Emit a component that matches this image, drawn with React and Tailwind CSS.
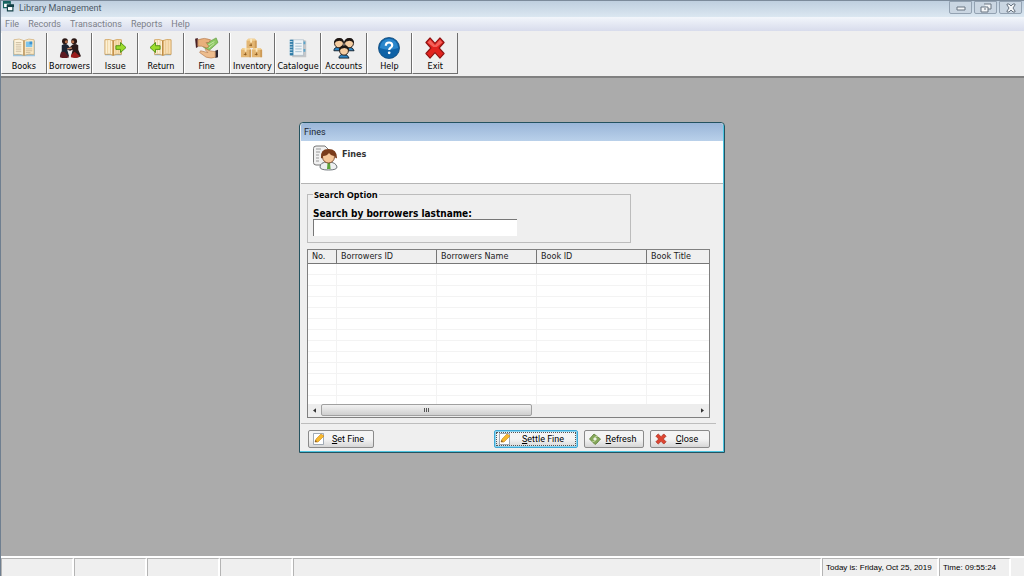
import { useState } from 'react';

const menus = ['File', 'Records', 'Transactions', 'Reports', 'Help'];

const columns = [
    { label: 'No.', width: 'w-[29px]' },
    { label: 'Borrowers ID', width: 'w-[100px]' },
    { label: 'Borrowers Name', width: 'w-[100px]' },
    { label: 'Book ID', width: 'w-[110px]' },
    { label: 'Book Title', width: 'w-[120px]' },
];

const emptyRows = Array.from({ length: 13 }, (_, i) => i);

/* ---------- toolbar icons ---------- */

function BooksIcon() {
    return (
        <svg viewBox="0 0 26 24" className="w-[26px] h-6" aria-hidden="true">
            <path d="M1 4h24v17H1z" fill="#9cc3de" />
            <path d="M2 3q6-2 11 1v16q-5-2-11-1z" fill="#fdf3dc" stroke="#c9a56c" strokeWidth=".7" />
            <path d="M24 3q-6-2-11 1v16q5-2 11-1z" fill="#fbe9c6" stroke="#c9a56c" strokeWidth=".7" />
            <path d="M4 6h6M4 8h6M4 10h6M4 12h6M4 14h6M4 16h6M15 13h7M15 15h7M15 17h5" stroke="#b9a88a" strokeWidth=".7" />
            <path d="M15 5h7v6h-7z" fill="#7cc4ec" />
            <path d="M19 5h3v3h-3z" fill="#3c93d0" />
            <path d="M13 4v16" stroke="#a3763a" strokeWidth="1" />
        </svg>
    );
}

function BorrowersIcon() {
    return (
        <svg viewBox="0 0 26 24" className="w-[26px] h-6" aria-hidden="true">
            <circle cx="7.500" cy="4.500" r="3.200" fill="#2a1714" />
            <circle cx="9" cy="5.200" r="1.700" fill="#b4714e" />
            <circle cx="17.500" cy="4.500" r="3.200" fill="#2a1714" />
            <circle cx="16" cy="5.200" r="1.700" fill="#b4714e" />
            <path d="M4 9q4-3 7 0l3 4-1 2-3-1 2 7q-5 3-10 0l2-6z" fill="#1d2433" />
            <path d="M22 9q-4-3-7 0l-3 3 1 3 3-1-2 7q6 3 11 0l-3-7z" fill="#2b1a1a" />
            <path d="M3 17l4-1 5 6q-5 2-10 0z" fill="#5e1a22" />
            <path d="M14 20l4-4 6 5q-4 3-10 1z" fill="#9b1d1c" />
            <path d="M10 13l5-1" stroke="#c98a68" strokeWidth="1.500" />
        </svg>
    );
}

function BookPages() {
    return (
        <>
            <path d="M2 4h18v16H2z" fill="#8fbbe0" />
            <path d="M2 3q5-1 9 1v16q-4-2-9-1z" fill="#fdf1d6" stroke="#c9923f" strokeWidth=".8" />
            <path d="M20 3q-5-1-9 1v16q4-2 9-1z" fill="#f9dfb4" stroke="#c9923f" strokeWidth=".8" />
            <path d="M5 3v15M8 3v16M14 3v16M17 3v15" stroke="#e6c58c" strokeWidth=".8" />
            <path d="M11 4v16" stroke="#b4792e" strokeWidth="1" />
        </>
    );
}

const arrowPath = 'M14 9.500h5V6l6 5.500-6 5.500v-3.500h-5z';

function IssueIcon() {
    return (
        <svg viewBox="0 0 26 24" className="w-[26px] h-6" aria-hidden="true">
            <BookPages />
            <path d={arrowPath} fill="#9bdc2c" stroke="#4f8d12" strokeWidth="1" strokeLinejoin="round" />
        </svg>
    );
}

function ReturnIcon() {
    return (
        <svg viewBox="0 0 26 24" className="w-[26px] h-6" aria-hidden="true">
            <g transform="translate(4 0)">
                <BookPages />
            </g>
            <path d={arrowPath} transform="matrix(-1 0 0 1 26 0)" fill="#9bdc2c" stroke="#4f8d12" strokeWidth="1" strokeLinejoin="round" />
        </svg>
    );
}

function FineIcon() {
    return (
        <svg viewBox="0 0 26 24" className="w-[26px] h-6" aria-hidden="true">
            <path d="M10 8L23 1l2 5-10 9-6-4z" fill="#8cc763" stroke="#5b9638" strokeWidth=".7" />
            <path d="M14 9l7-4M15 12l6-5" stroke="#cdeab0" strokeWidth="1" />
            <path d="M0 2l3-1v10l-2 1z" fill="#4a2226" />
            <path d="M3 3q7-3 14 0l-2 3h-3l3 4-2 2-6-2H3z" fill="#e8b07c" stroke="#a86a3d" strokeWidth=".6" />
            <path d="M22 15l3-1v8l-3 1z" fill="#2b2630" />
            <path d="M22 16l-6-1-4-2-1 1 3 3-8-2-1 2 7 5q6 2 10 0z" fill="#edbd8e" stroke="#a86a3d" strokeWidth=".6" />
        </svg>
    );
}

function InventoryBox({ x, y }) {
    return (
        <g transform={`translate(${x} ${y})`}>
            <path d="M0 2l2-2h7l2 2v8H0z" fill="#e3b673" />
            <path d="M0 2l2-2h7l2 2z" fill="#f2d296" />
            <path d="M9 2h2v8H9z" fill="#cd9a56" />
            <path d="M4 0h2v4H4z" fill="#fbe7bd" />
            <path d="M5 5v3M3 7h3" stroke="#8d5c20" strokeWidth="1" />
        </g>
    );
}

function InventoryIcon() {
    return (
        <svg viewBox="0 0 26 24" className="w-[26px] h-6" aria-hidden="true">
            <InventoryBox x={7} y={2} />
            <InventoryBox x={1} y={12} />
            <InventoryBox x={13} y={12} />
        </svg>
    );
}

function CatalogueIcon() {
    return (
        <svg viewBox="0 0 26 24" className="w-[26px] h-6" aria-hidden="true">
            <path d="M19 3l3 1v18H7l-1-2z" fill="#c4c6c8" />
            <path d="M5 3h14v17H5z" fill="#eef3f6" stroke="#9db1bf" strokeWidth=".6" />
            <path d="M4 3h4v17H4z" fill="#2f7ca8" />
            <path d="M3 5h4M3 8h4M3 11h4M3 14h4M3 17h4" stroke="#d7e6ee" strokeWidth="1" />
            <path d="M10 7h7M10 10h7M10 13h7M10 16h7" stroke="#8fb0c6" strokeWidth=".8" />
            <path d="M19 5h2v3h-2zM19 13h2v3h-2z" fill="#5aa5cc" />
        </svg>
    );
}

function Person({ x, y }) {
    return (
        <g transform={`translate(${x} ${y})`}>
            <path d="M1 14q0-4 5-4t6 4z" fill="#2e86c6" stroke="#14202b" strokeWidth="1" />
            <circle cx="6.500" cy="6" r="4.800" fill="#f5cda2" stroke="#1c1512" strokeWidth="1" />
            <path d="M1 6q0-6 6-6 5 0 5 6-2-3-5-3-4 0-6 3z" fill="#1c1512" />
        </g>
    );
}

function AccountsIcon() {
    return (
        <svg viewBox="0 0 26 24" className="w-[26px] h-6" aria-hidden="true">
            <Person x={1} y={1} />
            <Person x={12} y={1} />
            <Person x={6.5} y={9} />
        </svg>
    );
}

function HelpIcon() {
    return (
        <svg viewBox="0 0 26 24" className="w-[26px] h-6" aria-hidden="true">
            <circle cx="13" cy="12" r="11.500" fill="#0f62a6" stroke="#0b4474" strokeWidth=".8" />
            <path d="M3 12a10 10 0 0 1 20 0q-10 4-20 0z" fill="#2a86cb" />
            <path d="M9.500 9.500q0-3.500 3.600-3.500 3.400 0 3.400 3 0 1.800-1.800 2.800-1.500.900-1.500 2.500" fill="none" stroke="#fff" strokeWidth="2.400" />
            <circle cx="13.200" cy="17.200" r="1.500" fill="#fff" />
        </svg>
    );
}

const crossPath = 'M7 1l6 6 6-6 5 5-6 6 6 6-5 5-6-6-6 6-5-5 6-6-6-6z';

function ExitIcon() {
    return (
        <svg viewBox="0 0 26 24" className="w-[26px] h-6" aria-hidden="true">
            <g transform="translate(1.300 0) scale(.9 1)">
                <path d={crossPath} fill="#e2231f" stroke="#8e1413" strokeWidth="1.400" strokeLinejoin="round" />
                <path d="M7 3l6 6 6-6 3 3-7 5h-4L4 6z" fill="#f4615a" />
            </g>
        </svg>
    );
}

const tools = [
    { label: 'Books', Icon: BooksIcon },
    { label: 'Borrowers', Icon: BorrowersIcon },
    { label: 'Issue', Icon: IssueIcon },
    { label: 'Return', Icon: ReturnIcon },
    { label: 'Fine', Icon: FineIcon },
    { label: 'Inventory', Icon: InventoryIcon },
    { label: 'Catalogue', Icon: CatalogueIcon },
    { label: 'Accounts', Icon: AccountsIcon },
    { label: 'Help', Icon: HelpIcon },
    { label: 'Exit', Icon: ExitIcon },
];

/* ---------- small icons ---------- */

function AppIcon() {
    return (
        <svg viewBox="0 0 10 10" className="w-[11px] h-[11px]" aria-hidden="true">
            <path d="M.500 1h6v5h-6z" fill="#fff" stroke="#16625f" strokeWidth="1" />
            <path d="M0 0h7v2.500H0z" fill="#16625f" />
            <path d="M4 4h5v5H4z" fill="#fff" stroke="#123f46" strokeWidth="1" />
            <path d="M3.500 3H10v2.500H3.500z" fill="#123f46" />
        </svg>
    );
}

function NoteIcon() {
    return (
        <svg viewBox="0 0 12 12" className="w-3 h-3 shrink-0" aria-hidden="true">
            <path d="M.500.500h10v11H.500z" fill="#fff" stroke="#8a97a5" strokeWidth=".8" />
            <path d="M2 9l1-3 5-5 3 2-6 6z" fill="#f7b92e" stroke="#c9851a" strokeWidth=".6" />
            <path d="M2 9l.600-2L4 8.500z" fill="#6b4a22" />
        </svg>
    );
}

function RefreshIcon() {
    return (
        <svg viewBox="0 0 12 12" className="w-3 h-3 shrink-0" aria-hidden="true">
            <path d="M.500 6L4 2l1-1 6.500 5L8 10l-2 1.500z" fill="#86a85a" stroke="#5d7d38" strokeWidth=".8" strokeLinejoin="round" />
            <path d="M4 6l2-2 2 2-2 2z" fill="#eef2e6" />
            <path d="M6 4l3-1M6 8l-3 1" stroke="#c5dba2" strokeWidth=".8" />
        </svg>
    );
}

function CloseIcon() {
    return (
        <svg viewBox="0 0 26 24" className="w-3 h-3 shrink-0" aria-hidden="true">
            <path d={crossPath} fill="#dd4531" stroke="#a52a1c" strokeWidth="1.500" strokeLinejoin="round" />
        </svg>
    );
}

function FinesIcon() {
    return (
        <svg viewBox="0 0 26 26" className="w-[26px] h-[26px]" aria-hidden="true">
            <path d="M4 1h9l4 4v15H4q-2.500 0-2.500-2.500v-14Q1.500 1 4 1z" fill="#f1f1f1" stroke="#777" strokeWidth="1" />
            <path d="M4 4h5M4 7h4M4 10h3M4 13h3M4 16h3" stroke="#999" strokeWidth="1" />
            <path d="M8 22q0-5 8-5t9 5q0 3-8.500 3T8 22z" fill="#eef0f2" stroke="#6d7478" strokeWidth="1" />
            <path d="M15.500 18h2.500l.600 6h-3.600z" fill="#5ca43a" />
            <circle cx="16.500" cy="12" r="6" fill="#f6c79a" stroke="#6b3517" strokeWidth=".8" />
            <path d="M9 13Q8 4 16.500 4T25 13q-2 1-2-2-4 0-6-3-2 3-6 3 0 3-2 2z" fill="#7a3c1b" />
        </svg>
    );
}

const windowButtons = [
    { label: 'Minimize', path: 'M2 4h8v3H2z' },
    { label: 'Restore', path: 'M4 1h7v5H8M1 4h7v5H1zM4 6h2' },
    { label: 'Close', path: 'M2 1h2l2 2 2-2h2v1L8 5l2 3v1H8L6 7 4 9H2V8l2-3-2-3z' },
];

/* ---------- pieces ---------- */

function DialogButton({ icon, label, className, focused }) {
    return (
        <button
            type="button"
            className={`flex h-[18px] rounded-[2px] border p-px text-[9px] leading-3 text-black bg-linear-to-b from-[#f4f4f4] from-50% to-[#d6d6d6] ${
                focused ? 'border-[#3fa9d6] ring-1 ring-inset ring-[#8fd6f2]' : 'border-[#8a8a8a]'
            } ${className}`}
        >
            <span className={`flex h-full w-full items-center border border-dotted pl-[2px] ${focused ? 'border-[#555]' : 'border-transparent'}`}>
                {icon}
                <span className="flex-1 text-center">
                    <u className="underline-offset-1">{label[0]}</u>
                    {label.slice(1)}
                </span>
            </span>
        </button>
    );
}

function StatusPanel({ className, children }) {
    return (
        <div className={`h-full border-l border-t border-[#b4b4b4] border-r-2 border-r-white px-[3px] pt-[3px] text-[8px] leading-3 whitespace-nowrap ${className}`}>
            {children}
        </div>
    );
}

function FinesDialog() {
    const [lastname, setLastname] = useState('');

    return (
        <section
            role="dialog"
            aria-label="Fines"
            className="w-[426px] max-w-full rounded-t-[4px] border border-[#24525f] bg-[#efefef] shadow-[inset_-1px_-1px_0_#4cc4e0]"
        >
            <header className="mx-px h-[18px] rounded-t-[3px] bg-linear-to-b from-[#9ab6d8] to-[#b9d0ea] px-[3px] text-[9px] leading-[18px] text-[#1c2733]">
                Fines
            </header>
            <div className="mx-px flex h-[43px] gap-1 border-b border-[#b5b5b5] bg-white pl-[11px] pt-1">
                <FinesIcon />
                <h1 className="font-['DejaVu_Sans_Condensed','DejaVu_Sans',sans-serif] pt-[3px] text-[9px] font-bold leading-3 text-[#333]">
                    Fines
                </h1>
            </div>

            <div className="px-[7px] pt-[5px]">
                <fieldset className="h-[54px] w-[324px] border border-[#bcbcbc] px-[5px]">
                    <legend className="font-['Open_Sans',sans-serif] px-px text-[9px] font-bold leading-[11px] text-black">
                        Search Option
                    </legend>
                    <label
                        htmlFor="lastname"
                        className="font-['DejaVu_Sans_Condensed','DejaVu_Sans',sans-serif] mt-2 block text-[10px] font-bold leading-[11px] text-black"
                    >
                        Search by borrowers lastname:
                    </label>
                    <input
                        id="lastname"
                        type="text"
                        value={lastname}
                        onChange={(e) => setLastname(e.target.value)}
                        className="block h-[17px] w-[204px] border-l border-t border-[#777] bg-white px-1 text-[9px] outline-none"
                    />
                </fieldset>

                <div className="mr-[7px] mt-[6px] border border-[#808080] bg-white">
                    <div className="h-[154px] overflow-hidden">
                        <table className="w-[459px] table-fixed border-separate border-spacing-0">
                            <thead>
                                <tr className="h-[14px]">
                                    {columns.map((col) => (
                                        <th
                                            key={col.label}
                                            className={`${col.width} h-[14px] border-b border-r border-[#777] bg-[#efefef] p-0 pl-1 text-left font-['DejaVu_Sans_Condensed','DejaVu_Sans',sans-serif] text-[9px] font-normal leading-3 text-[#222]`}
                                        >
                                            {col.label}
                                        </th>
                                    ))}
                                </tr>
                            </thead>
                            <tbody>
                                {emptyRows.map((row) => (
                                    <tr key={row} className="h-[11px]">
                                        {columns.map((col) => (
                                            <td key={col.label} className="border-b border-r border-[#f3f3f3] p-0" />
                                        ))}
                                    </tr>
                                ))}
                            </tbody>
                        </table>
                    </div>
                    <div className="flex h-[13px] bg-[#ededed]">
                        <button type="button" aria-label="Scroll left" className="flex w-[13px] items-center justify-center">
                            <svg viewBox="0 0 4 6" className="h-[5px] w-[3px]"><path d="M4 0v6L0 3z" fill="#333" /></svg>
                        </button>
                        <div className="flex-1">
                            <div className="flex h-3 w-[211px] items-center justify-center gap-px rounded-[2px] border border-[#a0a0a0] bg-linear-to-b from-[#f2f2f2] to-[#cfcfcf]">
                                <span className="h-1 w-px bg-[#555]" />
                                <span className="h-1 w-px bg-[#555]" />
                                <span className="h-1 w-px bg-[#555]" />
                            </div>
                        </div>
                        <button type="button" aria-label="Scroll right" className="flex w-[13px] items-center justify-center">
                            <svg viewBox="0 0 4 6" className="h-[5px] w-[3px]"><path d="M0 0v6l4-3z" fill="#333" /></svg>
                        </button>
                    </div>
                </div>
            </div>

            <footer className="ml-px mr-2 mt-[5px] flex gap-[6px] border-t border-[#bdbdbd] pb-1 pl-[7px] pr-[6px] pt-[6px]">
                <DialogButton icon={<NoteIcon />} label="Set Fine" className="mr-auto w-[66px]" />
                <DialogButton icon={<NoteIcon />} label="Settle Fine" className="w-[84px]" focused />
                <DialogButton icon={<RefreshIcon />} label="Refresh" className="w-[60px]" />
                <DialogButton icon={<CloseIcon />} label="Close" className="w-[60px]" />
            </footer>
        </section>
    );
}

export default function App() {
    return (
        <div className="flex min-h-screen flex-col overflow-hidden border-l border-[#6f7f90] bg-[#ababab] font-['Roboto',sans-serif] text-[#222]">
            <header className="flex h-[17px] items-start border-t border-[#7c8b9b] bg-linear-to-b from-[#bfcfdf] to-[#dbe7f1] pl-[2px] pr-[2px]">
                <AppIcon />
                <span className="flex-1 pl-[5px] text-[9px] leading-[14px] text-[#4c5866]">Library Management</span>
                <div className="flex gap-[2px]">
                    {windowButtons.map((btn) => (
                        <button
                            key={btn.label}
                            type="button"
                            aria-label={btn.label}
                            className="flex h-[13px] w-[23px] items-center justify-center rounded-b-[2px] border border-[#93a2b2] bg-[#cad6e2]"
                        >
                            <svg viewBox="0 0 12 10" className="h-[10px] w-3" aria-hidden="true">
                                <path d={btn.path} fill="#f4f6f8" stroke="#687481" strokeWidth="1" />
                            </svg>
                        </button>
                    ))}
                </div>
            </header>

            <nav className="flex h-[14px] gap-[9px] bg-linear-to-b from-[#f2f6fb] to-[#d8dcec] pl-1">
                {menus.map((menu) => (
                    <button key={menu} type="button" className="text-[9px] leading-[14px] text-[#7b7f88]">
                        {menu}
                    </button>
                ))}
            </nav>

            <div className="h-[47px] border-b-2 border-[#808080] bg-[#efefef] pt-[2px]">
                <div className="flex w-[457px]">
                    {tools.map(({ label, Icon }) => (
                        <button
                            key={label}
                            type="button"
                            className="flex h-[41px] min-w-0 flex-1 flex-col items-center border-b border-r border-[#6f6f6f] border-l border-l-white pt-1 font-['DejaVu_Sans_Condensed','DejaVu_Sans',sans-serif] text-[9px] leading-[14px] text-black"
                        >
                            <Icon />
                            {label}
                        </button>
                    ))}
                </div>
            </div>

            <main className="pointer-events-none fixed inset-0 flex items-center justify-center pb-[2px]">
                <div className="pointer-events-auto max-w-full">
                    <FinesDialog />
                </div>
            </main>

            <footer className="mt-auto flex h-5 border-t-2 border-white bg-[#efefef] font-['Liberation_Sans',sans-serif] text-black">
                <StatusPanel className="w-[73px]" />
                <StatusPanel className="w-[73px]" />
                <StatusPanel className="w-[73px]" />
                <StatusPanel className="w-[73px]" />
                <StatusPanel className="flex-1" />
                <StatusPanel className="w-[117px]">Today is: Friday, Oct 25, 2019</StatusPanel>
                <StatusPanel className="w-[72px]">Time: 09:55:24</StatusPanel>
                <div className="w-[13px]" />
            </footer>
        </div>
    );
}
